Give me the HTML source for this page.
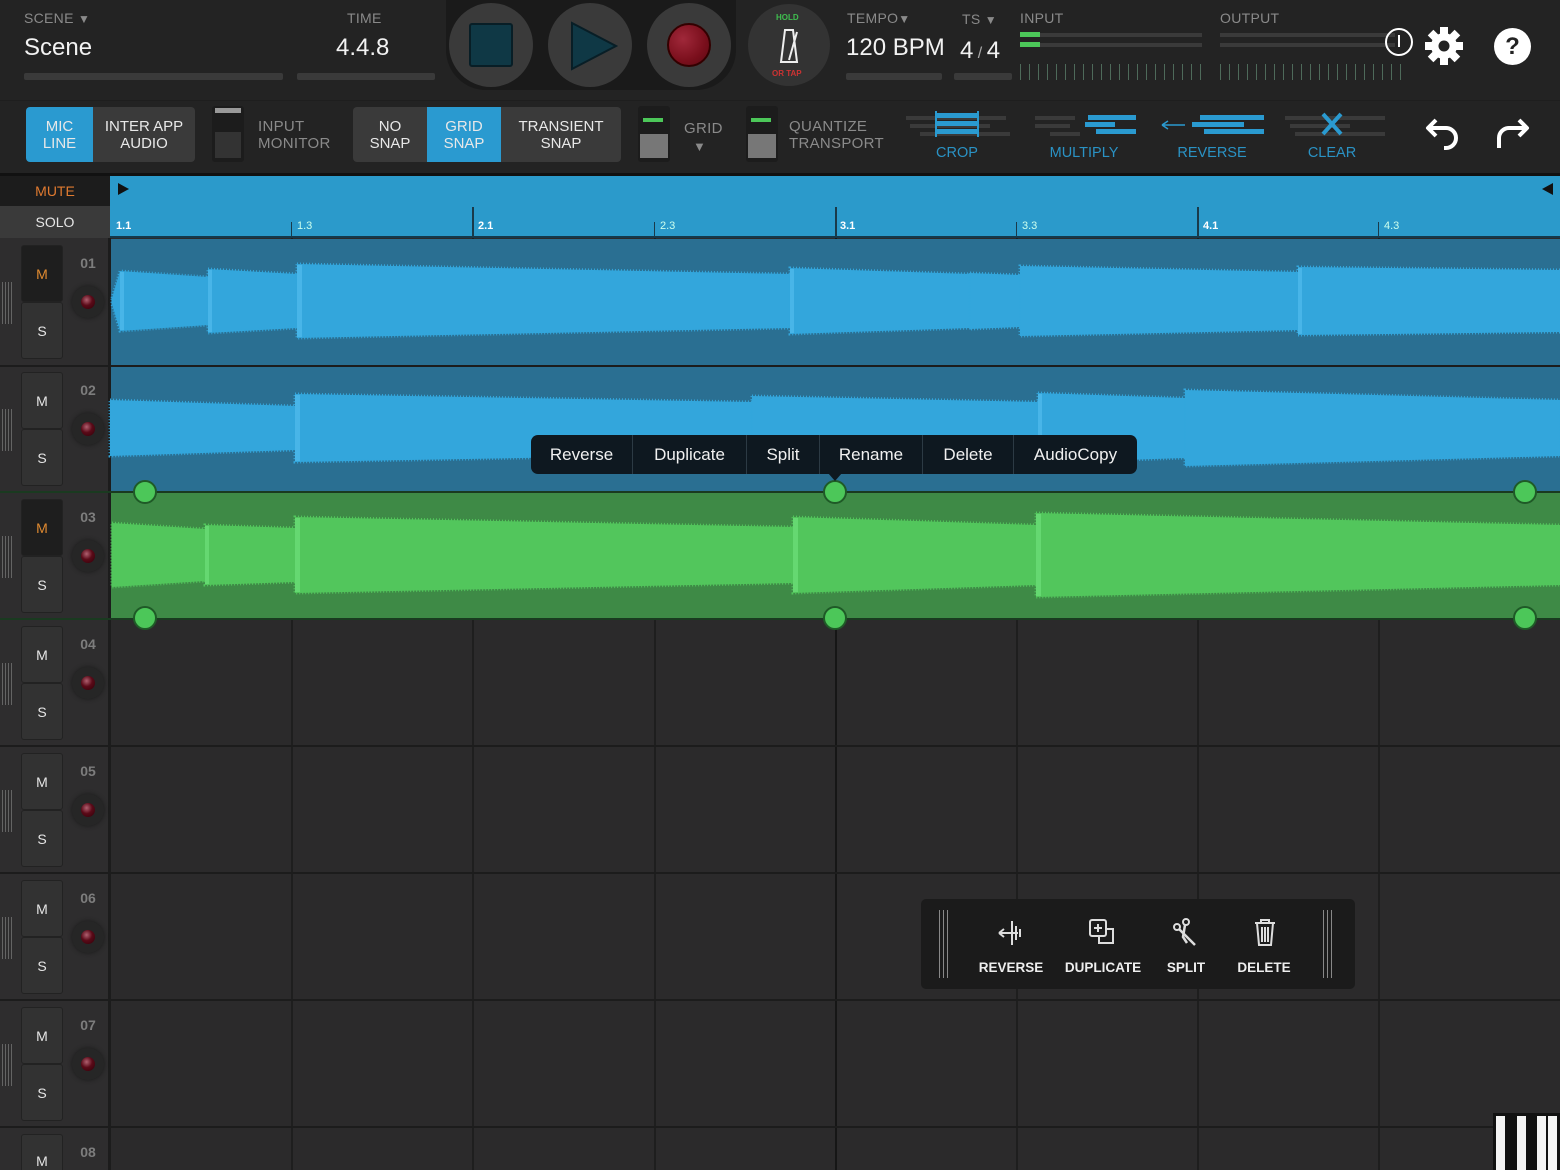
<!DOCTYPE html>
<html style="overflow:hidden;width:1560px;height:1170px"><head><meta charset="utf-8"><style>
*{margin:0;padding:0;box-sizing:border-box}
body{width:1560px;height:1170px;overflow:hidden;background:#2b2a2b;font-family:"Liberation Sans",sans-serif;position:relative;color:#ddd}
.a{position:absolute}
.lbl{font-size:14px;color:#8a8a8a;letter-spacing:.3px}
.big{font-size:24px;color:#f2f2f2}
.bar{background:#3a3a3a;height:7px;border-radius:2px}
.btn{position:absolute;font-size:15px;line-height:17px;text-align:center;color:#e8e8e8;display:flex;align-items:center;justify-content:center;background:#3a3a3a}
.sw{position:absolute;width:32px;height:56px;background:#1c1c1c;border-radius:3px}
.tl{font-size:14.5px;color:#2a92c4;text-align:center}
.m,.s{position:absolute;left:21px;width:42px;height:57px;background:#323232;border:1px solid #222;border-radius:3px;font-size:14px;color:#e6e6e6;display:flex;align-items:center;justify-content:center}
.num{position:absolute;left:74px;width:28px;text-align:center;font-size:14px;font-weight:bold;color:#7d7d7d}
.knob{position:absolute;left:72px;width:32px;height:32px;border-radius:50%;background:#262626;box-shadow:0 0 4px #1a1a1a}
.knob:after{content:"";position:absolute;left:9px;top:9px;width:14px;height:14px;border-radius:50%;background:radial-gradient(circle at 40% 35%,#b06070 0,#5a0a18 45%,#300008 100%)}
.grip{position:absolute;left:2px;width:12px;height:42px;background:repeating-linear-gradient(90deg,#888 0 1px,transparent 1px 3px);opacity:.6}
.sep{position:absolute;left:0;width:1560px;height:2px;background:#1c1c1c}
.h{position:absolute;width:24px;height:24px;border-radius:50%;background:#4cc759;border:2px solid #1f5a27}
.pm{position:absolute;top:435px;height:39px;line-height:39px;font-size:17px;color:#f0f0f0;text-align:center;border-right:1px solid #2c3a44}
.bt{position:absolute;top:960px;font-size:13.5px;color:#eee;font-weight:bold;text-align:center}
</style></head><body>

<div class="a" style="left:0;top:0;width:1560px;height:100px;background:#232323"></div>
<div class="a" style="left:0;top:100px;width:1560px;height:74px;background:#232323;border-top:1px solid #1e1e1e"></div>
<div class="a lbl" style="left:24px;top:10px">SCENE <span style="font-size:12px">▼</span></div>
<div class="a big" style="left:24px;top:34px">Scene</div>
<div class="a bar" style="left:24px;top:73px;width:259px"></div>
<div class="a lbl" style="left:347px;top:10px">TIME</div>
<div class="a big" style="left:336px;top:34px">4.4.8</div>
<div class="a bar" style="left:297px;top:73px;width:138px"></div>

<div class="a" style="left:446px;top:0;width:290px;height:90px;background:#1a1a1a;border-radius:0 0 40px 40px"></div>
<div class="a" style="left:449px;top:3px;width:84px;height:84px;border-radius:50%;background:#3a3a3a"></div>
<div class="a" style="left:469px;top:23px;width:44px;height:44px;background:#0f3845;border:2px solid #081e26;border-radius:3px"></div>
<div class="a" style="left:548px;top:3px;width:84px;height:84px;border-radius:50%;background:#3a3a3a"></div>
<svg class="a" style="left:548px;top:3px" width="84" height="84"><polygon points="24,20 68,43 24,66" fill="#0f3845" stroke="#081e26" stroke-width="2"/></svg>
<div class="a" style="left:647px;top:3px;width:84px;height:84px;border-radius:50%;background:#3a3a3a"></div>
<div class="a" style="left:667px;top:23px;width:44px;height:44px;border-radius:50%;background:radial-gradient(circle at 35% 35%,#a0283a,#7a0f1c 60%,#5a0812);border:2px solid #300"></div>
<div class="a" style="left:748px;top:4px;width:82px;height:82px;border-radius:50%;background:#333"></div>
<div class="a" style="left:776px;top:13px;font-size:8px;color:#3fbf4f;font-weight:bold">HOLD</div>
<div class="a" style="left:772px;top:69px;font-size:8px;color:#c33;font-weight:bold">OR TAP</div>
<svg class="a" style="left:775px;top:26px" width="28" height="38"><path d="M6 36 L10 4 H18 L22 36 Z M14 34 L22 6" fill="none" stroke="#eee" stroke-width="2"/></svg>

<div class="a lbl" style="left:847px;top:10px">TEMPO<span style="font-size:12px">▼</span></div>
<div class="a big" style="left:846px;top:34px">120 BPM</div>
<div class="a bar" style="left:846px;top:73px;width:96px"></div>
<div class="a lbl" style="left:962px;top:11px">TS <span style="font-size:12px">▼</span></div>
<div class="a big" style="left:960px;top:37px">4<span style="font-size:16px;color:#aaa"> / </span>4</div>
<div class="a bar" style="left:954px;top:73px;width:58px"></div>
<div class="a lbl" style="left:1020px;top:10px">INPUT</div>
<div class="a lbl" style="left:1220px;top:10px">OUTPUT</div>
<div class="a" style="left:1020px;top:33px;width:182px;height:4px;background:#3a3a3a"></div>
<div class="a" style="left:1020px;top:43px;width:182px;height:4px;background:#3a3a3a"></div>
<div class="a" style="left:1020px;top:32px;width:20px;height:5px;background:#4cc759"></div>
<div class="a" style="left:1020px;top:42px;width:20px;height:5px;background:#4cc759"></div>
<div class="a" style="left:1220px;top:33px;width:175px;height:4px;background:#3a3a3a"></div>
<div class="a" style="left:1220px;top:43px;width:175px;height:4px;background:#3a3a3a"></div>
<div class="a" style="left:1020px;top:64px;width:182px;height:16px;background:repeating-linear-gradient(90deg,#4e6a5a 0 1px,transparent 1px 9px)"></div>
<div class="a" style="left:1220px;top:64px;width:182px;height:16px;background:repeating-linear-gradient(90deg,#4e6a5a 0 1px,transparent 1px 9px)"></div>
<div class="a" style="left:1385px;top:28px;width:28px;height:28px;border-radius:50%;border:2.5px solid #fff"></div>
<div class="a" style="left:1398px;top:35px;width:2px;height:12px;background:#fff"></div>
<svg class="a" style="left:1424px;top:26px" width="40" height="40" viewBox="0 0 40 40"><g fill="#fff"><circle cx="20" cy="20" r="13"/><g id="t"><rect x="16" y="1" width="8" height="8"/><rect x="16" y="31" width="8" height="8"/><rect x="1" y="16" width="8" height="8"/><rect x="31" y="16" width="8" height="8"/></g><use href="#t" transform="rotate(45 20 20)"/></g><circle cx="20" cy="20" r="5.5" fill="#232323"/></svg>
<div class="a" style="left:1494px;top:28px;width:37px;height:37px;border-radius:50%;background:#fff;color:#232323;font-weight:bold;font-size:24px;text-align:center;line-height:37px">?</div>

<div class="btn" style="left:26px;top:107px;width:67px;height:55px;background:#2a9ad0;border-radius:4px 0 0 4px">MIC<br>LINE</div>
<div class="btn" style="left:93px;top:107px;width:102px;height:55px;border-radius:0 4px 4px 0">INTER APP<br>AUDIO</div>
<div class="sw" style="left:212px;top:106px"><div class="a" style="left:3px;top:2px;width:26px;height:5px;background:#999"></div><div class="a" style="left:3px;top:26px;width:26px;height:26px;background:#333"></div></div>
<div class="a lbl" style="left:258px;top:118px;font-size:15px;line-height:17px">INPUT<br>MONITOR</div>
<div class="btn" style="left:353px;top:107px;width:74px;height:55px;border-radius:4px 0 0 4px">NO<br>SNAP</div>
<div class="btn" style="left:427px;top:107px;width:74px;height:55px;background:#2a9ad0">GRID<br>SNAP</div>
<div class="btn" style="left:501px;top:107px;width:120px;height:55px;border-radius:0 4px 4px 0">TRANSIENT<br>SNAP</div>
<div class="sw" style="left:638px;top:106px"><div class="a" style="left:5px;top:12px;width:20px;height:4px;background:#4cc759"></div><div class="a" style="left:2px;top:28px;width:28px;height:24px;background:#777"></div></div>
<div class="a lbl" style="left:684px;top:120px;font-size:15px">GRID</div>
<div class="a lbl" style="left:693px;top:139px;font-size:13px">▼</div>
<div class="sw" style="left:746px;top:106px"><div class="a" style="left:5px;top:12px;width:20px;height:4px;background:#4cc759"></div><div class="a" style="left:2px;top:28px;width:28px;height:24px;background:#777"></div></div>
<div class="a lbl" style="left:789px;top:118px;font-size:15px;line-height:17px">QUANTIZE<br>TRANSPORT</div>

<svg class="a" style="left:900px;top:108px" width="500" height="36">
<g fill="#3a3a3a"><rect x="6" y="8" width="100" height="4"/><rect x="10" y="16" width="80" height="4"/><rect x="20" y="24" width="90" height="4"/>
<rect x="135" y="8" width="40" height="4"/><rect x="135" y="16" width="35" height="4"/><rect x="150" y="24" width="30" height="4"/>
<rect x="385" y="8" width="100" height="4"/><rect x="390" y="16" width="60" height="4"/><rect x="395" y="24" width="90" height="4"/></g>
<g fill="#2a9ad0"><rect x="36" y="5" width="42" height="5"/><rect x="36" y="13" width="42" height="5"/><rect x="36" y="21" width="42" height="5"/><rect x="35" y="3" width="2" height="26"/><rect x="77" y="3" width="2" height="26"/>
<rect x="188" y="7" width="48" height="5"/><rect x="185" y="14" width="30" height="5"/><rect x="196" y="21" width="40" height="5"/>
<rect x="300" y="7" width="64" height="5"/><rect x="292" y="14" width="52" height="5"/><rect x="304" y="21" width="60" height="5"/>
<path d="M262 17 H285 M262 17 L268 13 M262 17 L268 21" stroke="#2a9ad0" stroke-width="1.5" fill="none"/>
<path d="M423 6 L441 26 M441 6 L423 26" stroke="#2a9ad0" stroke-width="4"/></g></svg>
<div class="a tl" style="left:927px;top:145px;width:60px">CROP</div>
<div class="a tl" style="left:1034px;top:145px;width:100px">MULTIPLY</div>
<div class="a tl" style="left:1162px;top:145px;width:100px">REVERSE</div>
<div class="a tl" style="left:1292px;top:145px;width:80px">CLEAR</div>
<svg class="a" style="left:1424px;top:114px" width="40" height="40"><path d="M12 6 L4 14 L12 22 M4 14 H22 A10 10 0 0 1 22 34 H20" fill="none" stroke="#fff" stroke-width="4" stroke-linejoin="round"/></svg>
<svg class="a" style="left:1491px;top:114px" width="40" height="40"><path d="M28 6 L36 14 L28 22 M36 14 H18 A10 10 0 0 0 8 24 V34" fill="none" stroke="#fff" stroke-width="4" stroke-linejoin="round"/></svg>

<div class="a" style="left:0;top:173px;width:1560px;height:3px;background:#111"></div>
<div class="a" style="left:0;top:176px;width:110px;height:30px;background:#1c1c1c;color:#e07a30;font-size:14px;text-align:center;line-height:30px">MUTE</div>
<div class="a" style="left:0;top:206px;width:110px;height:32px;background:#3a3a3a;color:#e6e6e6;font-size:14px;text-align:center;line-height:32px">SOLO</div>
<div class="a" style="left:110px;top:176px;width:1450px;height:62px;background:#2b9acb"></div>
<div class="a" style="left:118px;top:183px;width:0;height:0;border-left:11px solid #111;border-top:6px solid transparent;border-bottom:6px solid transparent"></div>
<div class="a" style="left:1542px;top:183px;width:0;height:0;border-right:11px solid #111;border-top:6px solid transparent;border-bottom:6px solid transparent"></div>
<div class="a" style="left:110px;top:236px;width:1450px;height:2px;background:#14394c"></div>
<div style="font-size:11px;color:#fff">
<div class="a" style="left:116px;top:220px;font-weight:bold">1.1</div>
<div class="a" style="left:291px;top:222px;width:1px;height:15px;background:#1a3a4a"></div><div class="a" style="left:297px;top:220px;color:#cfe">1.3</div>
<div class="a" style="left:472px;top:207px;width:2px;height:30px;background:#1a3a4a"></div><div class="a" style="left:478px;top:220px;font-weight:bold">2.1</div>
<div class="a" style="left:654px;top:222px;width:1px;height:15px;background:#1a3a4a"></div><div class="a" style="left:660px;top:220px;color:#cfe">2.3</div>
<div class="a" style="left:835px;top:207px;width:2px;height:30px;background:#1a3a4a"></div><div class="a" style="left:840px;top:220px;font-weight:bold">3.1</div>
<div class="a" style="left:1016px;top:222px;width:1px;height:15px;background:#1a3a4a"></div><div class="a" style="left:1022px;top:220px;color:#cfe">3.3</div>
<div class="a" style="left:1197px;top:207px;width:2px;height:30px;background:#1a3a4a"></div><div class="a" style="left:1203px;top:220px;font-weight:bold">4.1</div>
<div class="a" style="left:1378px;top:222px;width:1px;height:15px;background:#1a3a4a"></div><div class="a" style="left:1384px;top:220px;color:#cfe">4.3</div>
</div>

<div class="a" style="left:0;top:238px;width:110px;height:932px;background:#2e2d2e"></div>
<div class="a" style="left:108px;top:238px;width:3px;height:932px;background:#1c1c1c"></div>
<div class="a" style="left:291px;top:238px;width:2px;height:932px;background:#1e1e1e"></div>
<div class="a" style="left:472px;top:238px;width:2px;height:932px;background:#1e1e1e"></div>
<div class="a" style="left:654px;top:238px;width:2px;height:932px;background:#1e1e1e"></div>
<div class="a" style="left:835px;top:238px;width:2px;height:932px;background:#161616"></div>
<div class="a" style="left:1016px;top:238px;width:2px;height:932px;background:#1e1e1e"></div>
<div class="a" style="left:1197px;top:238px;width:2px;height:932px;background:#1e1e1e"></div>
<div class="a" style="left:1378px;top:238px;width:2px;height:932px;background:#1e1e1e"></div>

<div class="a" style="left:111px;top:239px;width:1449px;height:126px;background:#2a6f92"></div>
<div class="a" style="left:111px;top:366px;width:1449px;height:126px;background:#2a6f92"></div>
<div class="a" style="left:111px;top:493px;width:1449px;height:126px;background:#3e8a46"></div>
<svg class="a" style="left:0;top:0" width="1560" height="640">
<g fill="#33a6dc" stroke="#33a6dc" stroke-width="3" stroke-dasharray="1 2">
<polygon points="112,298 120,271 208,277 208,325 120,331 112,304"/>
<polygon points="208,269 297,274 297,328 208,333"/>
<polygon points="297,264 790,274 790,328 297,338"/>
<polygon points="790,268 970,274 970,328 790,334"/>
<polygon points="970,273 1020,275 1020,327 970,329"/>
<polygon points="1020,266 1298,272 1298,330 1020,336"/>
<polygon points="1298,267 1560,270 1560,332 1298,335"/>
<polygon points="110,400 295,406 295,450 110,456"/>
<polygon points="295,394 752,402 752,454 295,462"/>
<polygon points="752,396 1038,402 1038,454 752,460"/>
<polygon points="1038,393 1185,398 1185,458 1038,463"/>
<polygon points="1185,390 1560,400 1560,456 1185,466"/>
</g>
<g fill="#52c65c" stroke="#52c65c" stroke-width="3" stroke-dasharray="1 2">
<polygon points="112,523 205,529 205,581 112,587"/>
<polygon points="205,525 295,528 295,582 205,585"/>
<polygon points="295,517 793,527 793,583 295,593"/>
<polygon points="793,517 1036,525 1036,585 793,593"/>
<polygon points="1036,513 1560,525 1560,585 1036,597"/>
</g>
<g fill="#56bff0" opacity=".6"><rect x="120" y="272" width="4" height="58"/><rect x="208" y="270" width="4" height="62"/><rect x="297" y="265" width="5" height="72"/><rect x="790" y="269" width="4" height="64"/><rect x="1298" y="268" width="4" height="66"/><rect x="295" y="395" width="5" height="66"/><rect x="1038" y="394" width="4" height="68"/></g>
<g fill="#6ee07a" opacity=".7"><rect x="205" y="526" width="4" height="58"/><rect x="295" y="518" width="5" height="74"/><rect x="793" y="518" width="5" height="74"/><rect x="1036" y="514" width="5" height="82"/></g>
</svg>

<div class="sep" style="top:365px"></div><div class="sep" style="top:491px;background:#1a3a20"></div><div class="sep" style="top:618px;background:#1a3a20"></div>
<div class="sep" style="top:745px"></div><div class="sep" style="top:872px"></div><div class="sep" style="top:999px"></div><div class="sep" style="top:1126px"></div>

<div class="m" style="top:245px;background:#1e1e1e;color:#e08a30">M</div><div class="s" style="top:302px">S</div><div class="num" style="top:255px">01</div><div class="knob" style="top:286px"></div><div class="grip" style="top:282px"></div>
<div class="m" style="top:372px">M</div><div class="s" style="top:429px">S</div><div class="num" style="top:382px">02</div><div class="knob" style="top:413px"></div><div class="grip" style="top:409px"></div>
<div class="m" style="top:499px;background:#1e1e1e;color:#e08a30">M</div><div class="s" style="top:556px">S</div><div class="num" style="top:509px">03</div><div class="knob" style="top:540px"></div><div class="grip" style="top:536px"></div>
<div class="m" style="top:626px">M</div><div class="s" style="top:683px">S</div><div class="num" style="top:636px">04</div><div class="knob" style="top:667px"></div><div class="grip" style="top:663px"></div>
<div class="m" style="top:753px">M</div><div class="s" style="top:810px">S</div><div class="num" style="top:763px">05</div><div class="knob" style="top:794px"></div><div class="grip" style="top:790px"></div>
<div class="m" style="top:880px">M</div><div class="s" style="top:937px">S</div><div class="num" style="top:890px">06</div><div class="knob" style="top:921px"></div><div class="grip" style="top:917px"></div>
<div class="m" style="top:1007px">M</div><div class="s" style="top:1064px">S</div><div class="num" style="top:1017px">07</div><div class="knob" style="top:1048px"></div><div class="grip" style="top:1044px"></div>
<div class="m" style="top:1134px;height:36px;align-items:flex-end;padding-bottom:1px;border-bottom:none;border-radius:3px 3px 0 0">M</div><div class="num" style="top:1144px">08</div>

<div class="h" style="left:133px;top:480px"></div><div class="h" style="left:823px;top:480px"></div><div class="h" style="left:1513px;top:480px"></div>
<div class="h" style="left:133px;top:606px"></div><div class="h" style="left:823px;top:606px"></div><div class="h" style="left:1513px;top:606px"></div>

<div class="a" style="left:531px;top:435px;width:606px;height:39px;background:#0e1820;border-radius:7px"></div>
<div class="a" style="left:828px;top:473px;width:0;height:0;border-top:8px solid #0e1820;border-left:7px solid transparent;border-right:7px solid transparent"></div>
<div class="pm" style="left:531px;width:102px">Reverse</div>
<div class="pm" style="left:633px;width:114px">Duplicate</div>
<div class="pm" style="left:747px;width:73px">Split</div>
<div class="pm" style="left:820px;width:103px">Rename</div>
<div class="pm" style="left:923px;width:91px">Delete</div>
<div class="pm" style="left:1014px;width:123px;border:none">AudioCopy</div>

<div class="a" style="left:921px;top:899px;width:434px;height:90px;background:#1b1b1b;border-radius:5px"></div>
<div class="a" style="left:939px;top:910px;width:12px;height:68px;background:repeating-linear-gradient(90deg,#888 0 1px,transparent 1px 4px)"></div>
<div class="a" style="left:1323px;top:910px;width:12px;height:68px;background:repeating-linear-gradient(90deg,#888 0 1px,transparent 1px 4px)"></div>
<svg class="a" style="left:996px;top:918px" width="32" height="30"><path d="M3 15 H22 M3 15 L8 11 M3 15 L8 19 M16 3 V27 M20 8 V22 M24 11 V19" stroke="#ddd" stroke-width="2" fill="none"/></svg>
<svg class="a" style="left:1087px;top:917px" width="32" height="32"><rect x="3" y="3" width="16" height="16" rx="2" fill="none" stroke="#ddd" stroke-width="2"/><path d="M11 7 V15 M7 11 H15" stroke="#ddd" stroke-width="2"/><path d="M19 12 H26 V26 H12 V19" fill="none" stroke="#ddd" stroke-width="2"/></svg>
<svg class="a" style="left:1171px;top:917px" width="30" height="32"><circle cx="6" cy="10" r="3" fill="none" stroke="#ddd" stroke-width="2"/><circle cx="15" cy="5" r="3" fill="none" stroke="#ddd" stroke-width="2"/><path d="M8 12 L24 28 M14 8 L12 20 L16 26" stroke="#ddd" stroke-width="2.5" fill="none"/></svg>
<svg class="a" style="left:1252px;top:917px" width="26" height="32"><path d="M3 6 H23 M9 6 V3 H17 V6 M5 6 L7 28 H19 L21 6 M10 10 V25 M13 10 V25 M16 10 V25" stroke="#ddd" stroke-width="2" fill="none"/></svg>
<div class="bt" style="left:971px;width:80px">REVERSE</div>
<div class="bt" style="left:1058px;width:90px">DUPLICATE</div>
<div class="bt" style="left:1161px;width:50px">SPLIT</div>
<div class="bt" style="left:1230px;width:68px">DELETE</div>

<div class="a" style="left:1493px;top:1113px;width:67px;height:57px;background:#111"></div>
<div class="a" style="left:1496px;top:1116px;width:9px;height:54px;background:#f4f4f4"></div>
<div class="a" style="left:1517px;top:1116px;width:9px;height:54px;background:#f4f4f4"></div>
<div class="a" style="left:1537px;top:1116px;width:9px;height:54px;background:#f4f4f4"></div>
<div class="a" style="left:1548px;top:1116px;width:9px;height:54px;background:#f4f4f4"></div>
</body></html>
